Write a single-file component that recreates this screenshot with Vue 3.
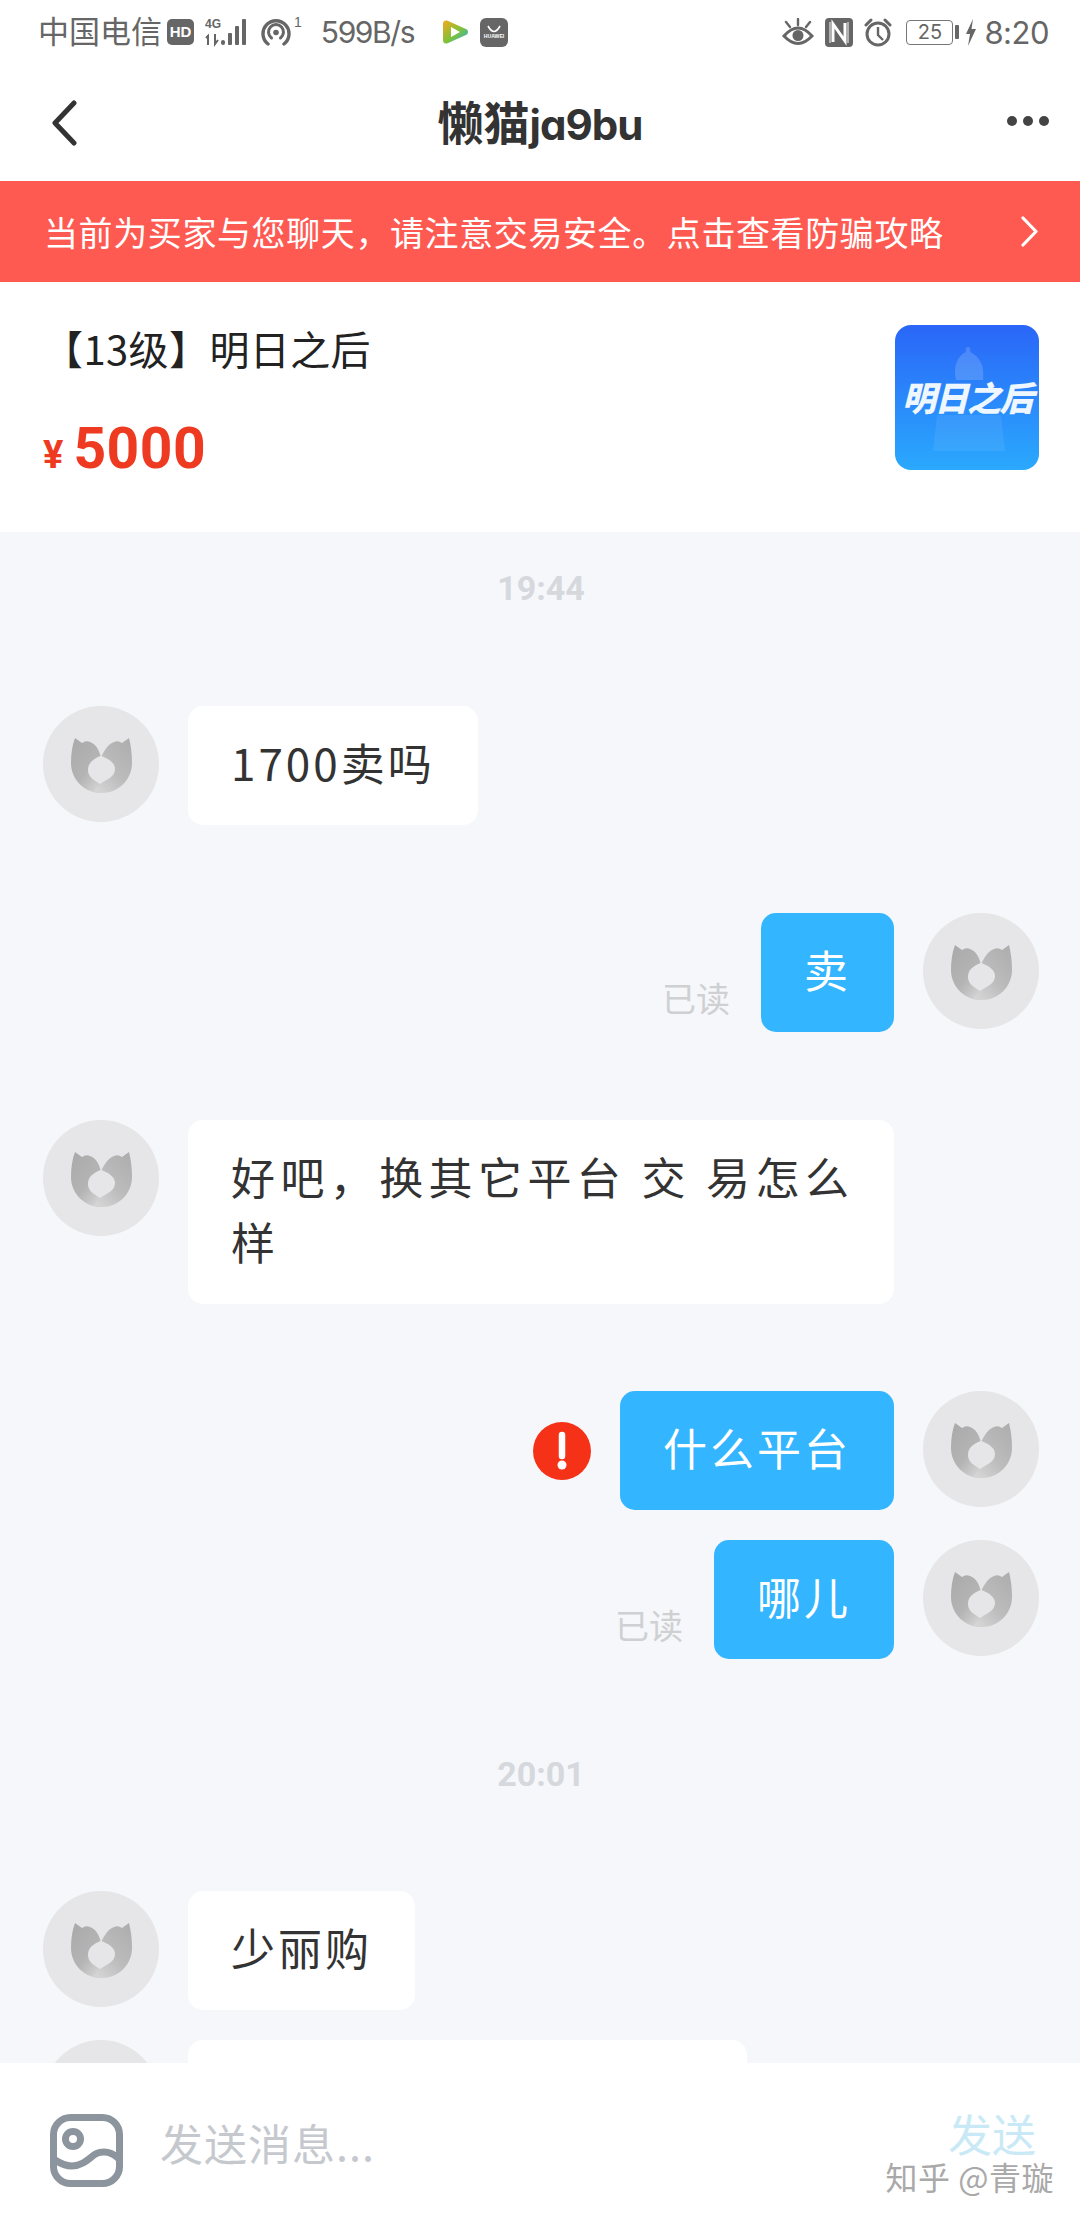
<script setup>
const items = [
  { kind: 'time', text: '19:44', first: true },
  { side: 'left', text: '1700卖吗' },
  { side: 'right', text: '卖', read: true },
  { side: 'left', text: '好吧，换其它平台 交 易怎么\n样', wide: true },
  { side: 'right', text: '什么平台', error: true, near: true },
  { side: 'right', text: '哪儿', read: true, tight: true },
  { kind: 'time', text: '20:01' },
  { side: 'left', text: '少丽购' },
  { side: 'left', text: '', tight: true, blank: true },
]
</script>

<template>
  <div class="screen">
    <header class="status">
      <div class="status-group">
        <span class="carrier">中国电信</span>
        <span class="hd">HD</span>
        <svg class="net" width="44" height="30" viewBox="0 0 44 30">
          <text x="0" y="11" class="tiny">4G</text>
          <path d="M3 28v-9l-2 2M3 18v10M10 17v10l3-4" fill="none" stroke="#666" stroke-width="2"/>
          <rect x="16" y="23" width="4" height="5" rx="2" fill="#666"/>
          <rect x="23" y="16" width="4" height="12" rx="1" fill="#666"/>
          <rect x="30" y="9" width="4" height="19" rx="1" fill="#666"/>
          <rect x="37" y="2" width="4" height="26" rx="1" fill="#666"/>
        </svg>
        <svg class="hot" width="30" height="28" viewBox="0 0 30 28">
          <path d="M7 26A13 13 0 1 1 23 26" fill="none" stroke="#666" stroke-width="3.4" stroke-linecap="round"/>
          <path d="M10.5 20A7.5 7.5 0 1 1 19.5 20" fill="none" stroke="#666" stroke-width="3" stroke-linecap="round"/>
          <circle cx="15" cy="14.5" r="2.8" fill="#666"/>
        </svg>
        <span class="sup">1</span>
        <span class="speed">599B/s</span>
        <svg class="tv" width="27" height="26" viewBox="0 0 27 26">
          <defs>
            <linearGradient id="tvg" x1="0" y1="0" x2="1" y2="1">
              <stop offset="0" stop-color="#f7a81b"/>
              <stop offset="0.55" stop-color="#7cc23c"/>
              <stop offset="1" stop-color="#20a9e8"/>
            </linearGradient>
          </defs>
          <path d="M5 1.500L25 10.500Q27 13 25 15.500L5 24.500Q1 25 1 21V5Q1 1 5 1.500Z" fill="url(#tvg)"/>
          <path d="M9 8L18 13L9 18Z" fill="#fff"/>
        </svg>
        <span class="hw">
          <svg width="14" height="8" viewBox="0 0 14 8"><path d="M1 1Q7 12 13 1" fill="none" stroke="#fff" stroke-width="1.6"/></svg>
          <span class="hw-text">HUAWEI</span>
        </span>
      </div>
      <div class="status-group">
        <svg class="eye" width="32" height="29" viewBox="0 0 32 29">
          <path d="M2 18Q16 2 30 18Q16 33 2 18Z" fill="none" stroke="#666" stroke-width="3"/>
          <circle cx="16" cy="17.500" r="5.500" fill="#666"/>
          <path d="M16 1v6M4 4l4 5M28 4l-4 5" stroke="#666" stroke-width="2.400" stroke-linecap="round"/>
        </svg>
        <svg class="nfc" width="28" height="29" viewBox="0 0 28 29">
          <rect width="28" height="29" rx="4" fill="#666"/>
          <path d="M8 24V6L20 23V5" fill="none" stroke="#fff" stroke-width="3"/>
          <path d="M5 4v21M23 4v21" stroke="#fff" stroke-width="1"/>
        </svg>
        <svg class="alarm" width="28" height="29" viewBox="0 0 28 29">
          <circle cx="14" cy="16" r="11" fill="none" stroke="#666" stroke-width="3"/>
          <path d="M14 9v8l5 5" fill="none" stroke="#666" stroke-width="2.400"/>
          <path d="M2 7l5-5M26 7l-5-5" stroke="#666" stroke-width="3" stroke-linecap="round"/>
        </svg>
        <span class="battery">25</span>
        <span class="nub"></span>
        <svg class="bolt" width="11" height="27" viewBox="0 0 11 27">
          <path d="M8 0L1 15H5L3 27L11 10H6.500Z" fill="#666"/>
        </svg>
        <span class="clock">8:20</span>
      </div>
    </header>

    <nav class="nav">
      <svg class="back" width="26" height="46" viewBox="0 0 26 46">
        <path d="M23 3L4 23L23 43" fill="none" stroke="#333" stroke-width="5" stroke-linecap="round" stroke-linejoin="round"/>
      </svg>
      <div class="title">懒猫<span class="latin">ja9bu</span></div>
      <div class="dots"><i></i><i></i><i></i></div>
    </nav>

    <div class="banner">
      <span>当前为买家与您聊天，请注意交易安全。点击查看防骗攻略</span>
      <svg width="19" height="31" viewBox="0 0 19 31">
        <path d="M3 2L16 15.500L3 29" fill="none" stroke="#fff" stroke-width="3.200" stroke-linecap="round" stroke-linejoin="round"/>
      </svg>
    </div>

    <section class="product">
      <div class="product-info">
        <div class="product-name">【13级】明日之后</div>
        <div class="price"><span class="yen">¥</span><span class="amount">5000</span></div>
      </div>
      <div class="thumb">
        <svg class="thumb-art" width="144" height="145" viewBox="0 0 144 145">
          <path d="M73 22C75 22 76 24 75 27C84 31 90 40 88 55H61C58 42 62 31 71 27C70 24 71 22 73 22Z" fill="#fff" opacity="0.16"/>
          <path d="M42 90H106L110 126H38Z" fill="#fff" opacity="0.07"/>
        </svg>
        <span class="thumb-text">明日之后</span>
      </div>
    </section>

    <main class="chat">
      <template v-for="(item, i) in items" :key="i">
        <div v-if="item.kind === 'time'" class="time" :class="{ first: item.first }">{{ item.text }}</div>
        <div v-else class="msg" :class="[item.side, { tight: item.tight, near: item.near }]">
          <div class="avatar">
            <svg width="116" height="116" viewBox="0 0 116 116">
              <defs>
                <linearGradient id="catL" x1="0" y1="0" x2="0.7" y2="1">
                  <stop offset="0" stop-color="#a9a9a9"/>
                  <stop offset="0.65" stop-color="#b4b4b4"/>
                  <stop offset="1" stop-color="#cfcfcf"/>
                </linearGradient>
                <linearGradient id="catR" x1="1" y1="0" x2="0.2" y2="1">
                  <stop offset="0" stop-color="#acacac"/>
                  <stop offset="0.6" stop-color="#bcbcbc"/>
                  <stop offset="1" stop-color="#d4d4d4"/>
                </linearGradient>
              </defs>
              <path d="M32 32L39 37Q43 34 47 36C53 38 56 44 57.500 50C50 53 45 57 45 64C45 71 51 74 57 78L58 87C42 87 28 74 28 57C28 48 29 40 32 32Z" fill="url(#catL)"/>
              <path d="M86 32L79 37Q75 34 71 36C65 38 62 44 58.500 50C66 53 72 57 72 63C72 71 63 74 57 78L50 85C53 86.500 56 87 59 87C75 87 89 74 89 57C89 48 88 40 86 32Z" fill="url(#catR)"/>
            </svg>
          </div>
          <div class="bubble" :class="{ blank: item.blank, wide: item.wide }">{{ item.text }}</div>
          <span v-if="item.read" class="read">已读</span>
          <span v-if="item.error" class="error">
            <svg width="58" height="58" viewBox="0 0 58 58">
              <circle cx="29" cy="29" r="29" fill="#f53218"/>
              <path d="M29 13v21" stroke="#fff" stroke-width="6.500" stroke-linecap="round"/>
              <circle cx="29" cy="43" r="4.500" fill="#fff"/>
            </svg>
          </span>
        </div>
      </template>
    </main>

    <footer class="footer">
      <svg class="pic" width="73" height="73" viewBox="0 0 73 73">
        <rect x="3.500" y="3.500" width="66" height="66" rx="17" fill="none" stroke="#8c959d" stroke-width="7"/>
        <circle cx="23" cy="25" r="7.500" fill="none" stroke="#8c959d" stroke-width="7"/>
        <path d="M5 46C14 52 24 54 33 49C42 44 44 38 54 38C60 38 65 41 69 45" fill="none" stroke="#8c959d" stroke-width="7"/>
      </svg>
      <span class="placeholder">发送消息...</span>
      <span class="send">发送</span>
      <span class="mark">知乎 @青璇</span>
    </footer>
  </div>
</template>

<style scoped>
.screen {
  width: 1080px;
  height: 2220px;
  display: flex;
  flex-direction: column;
  overflow: hidden;
  background: #fff;
  font-family: "Noto Sans CJK SC", "Noto Sans", sans-serif;
  color: #222;
}
.status {
  height: 64px;
  flex: none;
  display: flex;
  justify-content: space-between;
  align-items: center;
  padding: 0 31px 0 38px;
  color: #666;
}
.status-group { display: flex; align-items: center; }
.carrier { font-size: 31px; line-height: 32px; margin-top: -4px; }
.hd {
  margin-left: 5px;
  width: 27px;
  height: 26px;
  border-radius: 5px;
  background: #666;
  color: #fff;
  font: 700 15px/26px "Liberation Sans", sans-serif;
  text-align: center;
}
.net { margin-left: 11px; }
.tiny { font: 700 12px "Liberation Sans", sans-serif; fill: #666; }
.hot { margin-left: 12px; }
.sup { font: 400 14px/14px "Liberation Sans", sans-serif; margin: -20px 0 0 3px; }
.speed { margin-left: 19px; font: 400 30px/32px Inter, sans-serif; letter-spacing: -1.4px; }
.tv { margin-left: 28px; }
.hw {
  margin-left: 11px;
  width: 28px;
  height: 29px;
  border-radius: 6px;
  background: #666;
  display: flex;
  flex-direction: column;
  align-items: center;
  justify-content: center;
}
.hw-text { font: 700 6px/7px "Liberation Sans", sans-serif; color: #fff; transform: scale(0.85); }
.eye { margin-right: 11px; }
.nfc { margin-right: 11px; }
.alarm { margin-right: 14px; }
.battery {
  width: 47px;
  height: 25px;
  box-sizing: border-box;
  border: 1.5px solid #777;
  border-radius: 4px;
  font: 400 20px/22px Inter, sans-serif;
  text-align: center;
  color: #666;
}
.nub { width: 4px; height: 14px; background: #666; border-radius: 1px; margin: 0 6px 0 2px; }
.bolt { margin-right: 8px; }
.clock { font: 400 31px/32px Inter, sans-serif; letter-spacing: -0.5px; margin-top: 1px; }

.nav {
  height: 117px;
  flex: none;
  display: grid;
  grid-template-columns: 1fr auto 1fr;
  align-items: center;
  padding: 0 31px;
}
.back { justify-self: start; margin-left: 20px; }
.title {
  font-size: 46px;
  font-weight: 700;
  line-height: 60px;
  color: #333;
}
.latin {
  font-family: Inter, sans-serif;
  font-feature-settings: "cv11";
  font-size: 42px;
  font-weight: 700;
  letter-spacing: -1px;
}
.dots { justify-self: end; display: flex; gap: 6px; margin-top: -4px; }
.dots i { width: 10px; height: 10px; border-radius: 50%; background: #444; }

.banner {
  height: 101px;
  flex: none;
  background: #ff5a52;
  color: #fff;
  display: flex;
  align-items: center;
  justify-content: space-between;
  padding: 0 41px 0 44px;
  font-size: 34px;
  letter-spacing: 0.6px;
}
.product {
  height: 250px;
  flex: none;
  display: flex;
  justify-content: space-between;
  padding: 39px 41px 0 43px;
  box-sizing: border-box;
}
.product-info { display: flex; flex-direction: column; }
.product-name { font-size: 40px; line-height: 54px; letter-spacing: 0.4px; color: #222; }
.price { margin-top: 39px; display: flex; align-items: baseline; font-family: Roboto, sans-serif; font-weight: 700; color: #ef3a22; line-height: 70px; }
.yen { font-size: 38px; margin-right: 10px; }
.amount { font-size: 57px; letter-spacing: 0.5px; }
.thumb {
  width: 144px;
  height: 145px;
  margin-top: 4px;
  border-radius: 16px;
  background: linear-gradient(180deg, #2a66f8, #2aa9fd);
  position: relative;
  display: flex;
  align-items: center;
  justify-content: center;
  overflow: hidden;
}
.thumb-art { position: absolute; inset: 0; }
.thumb-text {
  position: relative;
  font-size: 34px;
  font-weight: 900;
  font-style: italic;
  letter-spacing: -1.500px;
  color: #eef6ff;
  margin-top: -2px;
}

.chat {
  flex: 1;
  min-height: 0;
  overflow: hidden;
  background: #f5f7fa;
  padding: 0 41px 0 43px;
}
.time {
  height: 110px;
  margin: 59px 0 63px;
  text-align: center;
  font: 700 34px/112px Roboto, sans-serif;
  color: #d5d8dd;
}
.time.first { margin: 0 0 64px; }
.msg { display: flex; align-items: flex-start; }
.msg + .msg { margin-top: 88px; }
.msg.near { margin-top: 87px; }
.msg.tight { margin-top: 30px; }
.right { flex-direction: row-reverse; }
.avatar {
  width: 116px;
  height: 116px;
  flex: none;
  border-radius: 50%;
  background: #e6e6e8;
}
.avatar svg { display: block; }
.bubble {
  max-width: 706px;
  box-sizing: border-box;
  padding: 24px 43px 30px;
  border-radius: 15px;
  background: #fff;
  color: #333;
  font-size: 44px;
  line-height: 65px;
  letter-spacing: 3px;
  white-space: pre-wrap;
}
.left .bubble { margin-left: 29px; }
.right .bubble { margin-right: 29px; background: #33b5ff; color: #fff; }
.bubble.wide { width: 706px; letter-spacing: 5.4px; padding-right: 20px; }
.bubble.blank { width: 559px; height: 119px; }
.read {
  align-self: flex-end;
  margin: 0 31px 16px 0;
  font-size: 34px;
  line-height: 36px;
  color: #cfd0d2;
}
.error { align-self: center; margin-right: 29px; height: 58px; }

.footer {
  height: 157px;
  flex: none;
  position: relative;
  display: flex;
  align-items: center;
  padding: 0 44px 0 50px;
  background: #fff;
}
.pic { margin-top: 18px; }
.placeholder { margin-left: 37px; font-size: 43px; letter-spacing: 1px; color: #c5c9ce; }
.send {
  margin-left: auto;
  font-size: 44px;
  line-height: 44px;
  color: #c9e9f6;
  margin-top: -18px;
}
.mark {
  position: absolute;
  right: 26px;
  top: 97px;
  font-size: 32px;
  line-height: 32px;
  color: #a9a9a9;
  letter-spacing: 0.5px;
}
</style>
